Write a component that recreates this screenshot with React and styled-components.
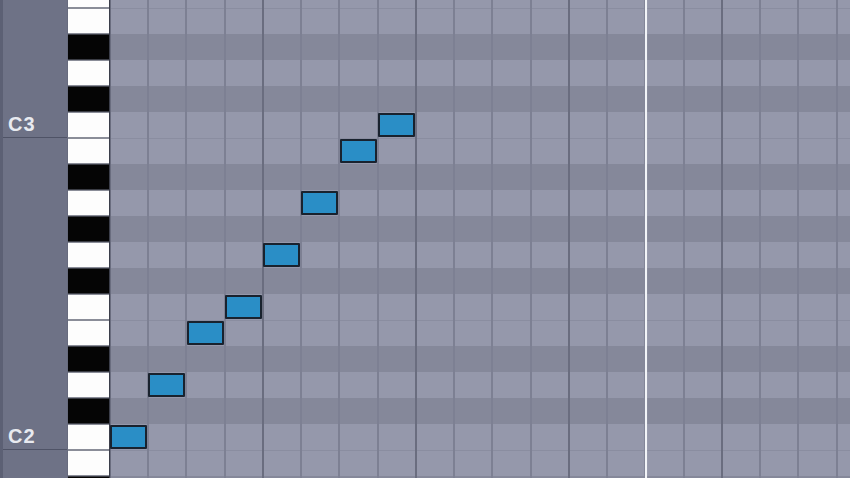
import React from 'react';
import styled, { createGlobalStyle } from 'styled-components';

const ROW = 26;
const STEP = 38.25;
const BAR = STEP * 4;
const OFFSET = -18;

// top to bottom, F3 down to A#1
const PITCHES = [
  'F3', 'E3', 'D#3', 'D3', 'C#3', 'C3', 'B2', 'A#2', 'A2', 'G#2',
  'G2', 'F#2', 'F2', 'E2', 'D#2', 'D2', 'C#2', 'C2', 'B1', 'A#1',
];

const isBlack = (p) => p.includes('#');
const isC = (p) => p[0] === 'C' && !isBlack(p);

const NOTES = [
  { pitch: 'C2', step: 0 },
  { pitch: 'D2', step: 1 },
  { pitch: 'E2', step: 2 },
  { pitch: 'F2', step: 3 },
  { pitch: 'G2', step: 4 },
  { pitch: 'A2', step: 5 },
  { pitch: 'B2', step: 6 },
  { pitch: 'C3', step: 7 },
];

const GlobalStyle = createGlobalStyle`
  html, body {
    margin: 0;
    padding: 0;
    overflow: hidden;
    background: #6e7286;
  }
`;

const Roll = styled.div`
  display: flex;
  width: 850px;
  height: 478px;
  overflow: hidden;
  font-family: "Liberation Sans", Arial, sans-serif;
`;

const LabelColumn = styled.div`
  width: 64px;
  flex: none;
  display: flex;
  flex-direction: column;
  background: #6e7286;
  border-left: 3px solid #5c6074;
`;

const LabelRow = styled.div`
  flex: none;
  height: ${ROW}px;
  box-sizing: border-box;
  display: flex;
  align-items: flex-end;
  padding: 0 0 3px 5px;
  border-bottom: 1px solid ${(p) => (p.$marked ? '#4f5366' : 'transparent')};
  color: #e8eaf0;
  font-size: 20px;
  font-weight: 700;
  letter-spacing: 1px;
  line-height: 1;
  &:first-child {
    margin-top: ${OFFSET}px;
  }
`;

const Keyboard = styled.div`
  width: 41px;
  flex: none;
  display: flex;
  flex-direction: column;
  background: #5a5e6e;
  border-left: 1px solid #676b7e;
  border-right: 1px solid #3b3e4a;
`;

const Key = styled.div`
  flex: none;
  box-sizing: border-box;
  height: ${ROW}px;
  background: ${(p) => (p.$black ? '#050505' : '#fdfdfd')};
  border-top: 1px solid ${(p) => (p.$black ? '#3a3c44' : '#8a8d98')};
  border-bottom: 1px solid ${(p) => (p.$black ? '#3a3c44' : '#8a8d98')};
  &:first-child {
    margin-top: ${OFFSET}px;
  }
`;

// one bar = four steps; step lines snapped to whole pixels
const Grid = styled.div`
  position: relative;
  flex: 1;
  overflow: hidden;

  &::after {
    content: "";
    position: absolute;
    inset: 0;
    pointer-events: none;
    background-image: linear-gradient(
      to right,
      #6a6d7f 0 2px,
      transparent 2px 38px,
      #7d8093 38px 40px,
      transparent 40px 76px,
      #7d8093 76px 78px,
      transparent 78px 115px,
      #7d8093 115px 117px,
      transparent 117px
    );
    background-size: ${BAR}px 100%;
    background-position: -1px 0;
  }
`;

const Lanes = styled.div`
  display: flex;
  flex-direction: column;
  margin-top: ${OFFSET}px;
`;

const Lane = styled.div`
  flex: none;
  height: ${ROW}px;
  box-sizing: border-box;
  background: ${(p) => (p.$black ? '#85889a' : '#9598ab')};
  border-top: 1px solid ${(p) => (p.$edge ? '#8a8da0' : 'transparent')};
`;

const Note = styled.div`
  position: absolute;
  z-index: 2;
  left: ${(p) => Math.round(p.$step * STEP)}px;
  top: ${(p) => OFFSET + p.$row * ROW + 1}px;
  width: 37px;
  height: 24px;
  box-sizing: border-box;
  background: #2a8ec6;
  border: 2px solid #19222e;
  border-radius: 1px;
`;

const Playhead = styled.div`
  position: absolute;
  z-index: 3;
  top: 0;
  bottom: 0;
  left: ${(p) => Math.round(p.$step * STEP) - 1}px;
  width: 2px;
  background: #f2f4f8;
  box-shadow: 0 0 1px rgba(255, 255, 255, 0.5);
`;

export default function App() {
  return (
    <>
      <GlobalStyle />
      <Roll>
        <LabelColumn>
          {PITCHES.map((p) => (
            <LabelRow key={p} $marked={isC(p)}>
              {isC(p) ? p : null}
            </LabelRow>
          ))}
        </LabelColumn>
        <Keyboard>
          {PITCHES.map((p) => (
            <Key key={p} $black={isBlack(p)} />
          ))}
        </Keyboard>
        <Grid>
          <Lanes>
            {PITCHES.map((p, i) => (
              <Lane
                key={p}
                $black={isBlack(p)}
                $edge={i > 0 && !isBlack(p) && !isBlack(PITCHES[i - 1])}
              />
            ))}
          </Lanes>
          {NOTES.map((n) => (
            <Note key={n.pitch} $step={n.step} $row={PITCHES.indexOf(n.pitch)} />
          ))}
          <Playhead $step={14} />
        </Grid>
      </Roll>
    </>
  );
}
